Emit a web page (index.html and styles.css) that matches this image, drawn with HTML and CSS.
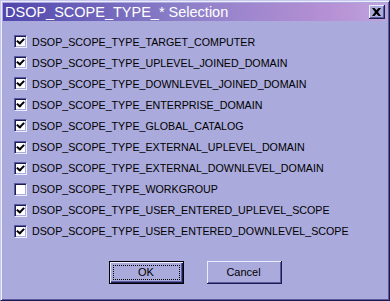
FILE: index.html
```html
<!DOCTYPE html>
<html lang="en">
<head>
  <meta charset="UTF-8">
  <title>DSOP_SCOPE_TYPE_* Selection</title>
  <link rel="stylesheet" href="styles.css">
</head>
<body>
  <div class="window">
    <div class="titlebar">
      <span class="title">DSOP_SCOPE_TYPE_* Selection</span>
      <button class="close-btn" aria-label="Close">
        <svg width="9" height="8" viewBox="0 0 9 8">
          <path d="M0 0h2.5l2 2.3 2-2.3H9L6 4l3 4H6.5l-2-2.3-2 2.3H0l3-4z" fill="#000"/>
        </svg>
      </button>
    </div>
    <div class="content">
      <ul class="scope-list">
        <li><span class="check on"></span>DSOP_SCOPE_TYPE_TARGET_COMPUTER</li>
        <li><span class="check on"></span>DSOP_SCOPE_TYPE_UPLEVEL_JOINED_DOMAIN</li>
        <li><span class="check on"></span>DSOP_SCOPE_TYPE_DOWNLEVEL_JOINED_DOMAIN</li>
        <li><span class="check on"></span>DSOP_SCOPE_TYPE_ENTERPRISE_DOMAIN</li>
        <li><span class="check on"></span>DSOP_SCOPE_TYPE_GLOBAL_CATALOG</li>
        <li><span class="check on"></span>DSOP_SCOPE_TYPE_EXTERNAL_UPLEVEL_DOMAIN</li>
        <li><span class="check on"></span>DSOP_SCOPE_TYPE_EXTERNAL_DOWNLEVEL_DOMAIN</li>
        <li><span class="check"></span>DSOP_SCOPE_TYPE_WORKGROUP</li>
        <li><span class="check on"></span>DSOP_SCOPE_TYPE_USER_ENTERED_UPLEVEL_SCOPE</li>
        <li><span class="check on"></span>DSOP_SCOPE_TYPE_USER_ENTERED_DOWNLEVEL_SCOPE</li>
      </ul>
      <div class="buttons">
        <button class="btn default"><span class="focus">OK</span></button>
        <button class="btn"><span>Cancel</span></button>
      </div>
    </div>
  </div>
</body>
</html>
```

FILE: styles.css
```css
body {
  margin: 0;
  width: 390px;
  height: 301px;
  font-family: 'Liberation Sans', Arial, sans-serif;
  background: #aaaadc;
}

.window {
  box-sizing: border-box;
  width: 390px;
  height: 301px;
  background: #aaaadc;
  border-top: 1px solid #c8c8ec;
  border-left: 1px solid #c8c8ec;
  border-right: 1px solid #1c1c50;
  border-bottom: 1px solid #1c1c50;
  box-shadow: inset 1px 1px 0 #ececfc, inset -1px -1px 0 #5a5aa0;
  padding: 2px;
}

.titlebar {
  height: 18px;
  display: flex;
  align-items: center;
  justify-content: space-between;
  padding: 0 2px 0 2px;
  background: linear-gradient(90deg, #5046ac, #8a7ec8 45%, #b690d4 85%, #c0a4dc);
}

.title {
  color: #fff;
  font-size: 14.5px;
}

.close-btn {
  box-sizing: border-box;
  width: 16px;
  height: 14px;
  padding: 0;
  display: flex;
  align-items: center;
  justify-content: center;
  background: #aaaadc;
  border: none;
  border-right: 1px solid #1c1c50;
  border-bottom: 1px solid #1c1c50;
  box-shadow: inset 1px 1px 0 #ececfc, inset -1px -1px 0 #5a5aa0;
}

.content {
  padding: 10px 0 0 11px;
}

.scope-list {
  list-style: none;
  margin: 0;
  padding: 0;
}

.scope-list li {
  height: 21.1px;
  display: flex;
  align-items: center;
  gap: 5px;
  font-size: 10.7px;
  color: #000;
}

.check {
  box-sizing: border-box;
  width: 13px;
  height: 13px;
  background: #fff;
  border-top: 1px solid #5a5aa0;
  border-left: 1px solid #5a5aa0;
  border-right: 1px solid #ececfc;
  border-bottom: 1px solid #ececfc;
  box-shadow: inset 1px 1px 0 #1c1c50, inset -1px -1px 0 #aaaadc;
  position: relative;
}

.check.on::after {
  content: '';
  position: absolute;
  left: 3px;
  top: 1px;
  width: 3px;
  height: 5px;
  border-right: 2px solid #000;
  border-bottom: 2px solid #000;
  transform: rotate(40deg) skewX(-5deg);
}

.buttons {
  display: flex;
  justify-content: center;
  gap: 23px;
  margin: 19px 0 0 -11px;
}

.btn {
  box-sizing: border-box;
  width: 75px;
  height: 23px;
  padding: 3px;
  background: #aaaadc;
  font-family: 'Liberation Sans', Arial, sans-serif;
  font-size: 11px;
  color: #000;
  border: none;
  border-right: 1px solid #1c1c50;
  border-bottom: 1px solid #1c1c50;
  box-shadow: inset 1px 1px 0 #ececfc, inset -1px -1px 0 #5a5aa0;
}

.btn span {
  display: flex;
  align-items: center;
  justify-content: center;
  height: 100%;
  box-sizing: border-box;
}

.btn.default {
  border: 1px solid #000;
  box-shadow: inset 1px 1px 0 #ececfc, inset -1px -1px 0 #1c1c50, inset -2px -2px 0 #5a5aa0;
}

.btn .focus {
  border: 1px dotted #000;
}
```
